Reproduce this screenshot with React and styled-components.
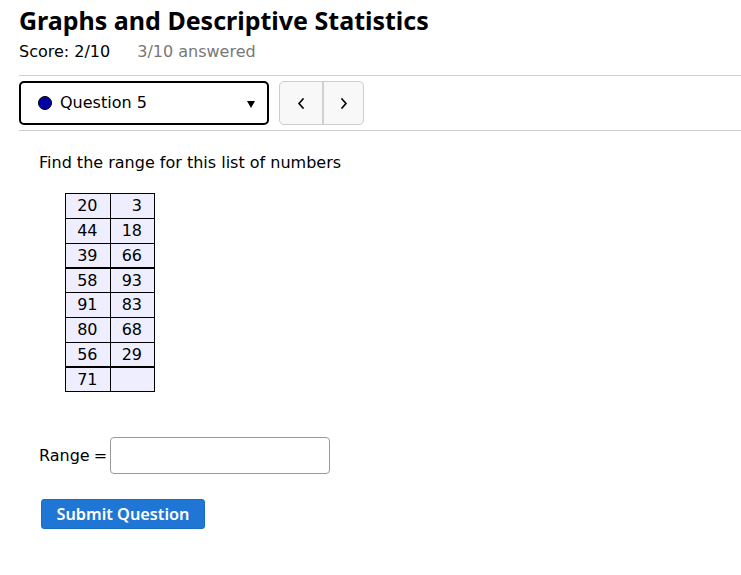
import React from "react";
import styled, { createGlobalStyle } from "styled-components";

const GlobalStyle = createGlobalStyle`
  html, body { margin: 0; padding: 0; background: #fff; }
  body { font-family: "DejaVu Sans", Verdana, sans-serif; font-size: 16px; color: #000; }
`;

const Page = styled.div`
  padding: 5px 0 40px 19px;
`;

const Title = styled.h1`
  margin: 0;
  font-family: "Noto Sans", "DejaVu Sans", sans-serif;
  font-weight: 700;
  font-size: 25px;
  line-height: 30px;
`;

const ScoreLine = styled.div`
  margin-top: 7px;
  display: flex;
  gap: 27px;
  line-height: 20px;
`;

const Muted = styled.span`
  color: #777;
`;

const Divider = styled.hr`
  margin: ${p => p.$top}px 0 0 0;
  border: 0;
  border-top: 1px solid #cfcfcf;
  height: 0;
`;

const NavBar = styled.div`
  margin-top: 5px;
  display: flex;
  align-items: center;
  gap: 10px;
`;

const QuestionSelect = styled.div`
  box-sizing: border-box;
  width: 250px;
  height: 44px;
  border: 2px solid #000;
  border-radius: 5px;
  display: flex;
  align-items: center;
  padding: 0 12px 0 17px;
  gap: 8px;
`;

const Dot = styled.span`
  box-sizing: border-box;
  width: 14px;
  height: 14px;
  border-radius: 50%;
  background: #0000a3;
  border: 1px solid #000;
  flex: none;
`;

const SelectLabel = styled.span`
  flex: 1;
  line-height: 20px;
`;

const Caret = styled.span`
  width: 0;
  height: 0;
  border-left: 4.5px solid transparent;
  border-right: 4.5px solid transparent;
  border-top: 7px solid #000;
  margin-top: 2px;
`;

const NavGroup = styled.div`
  display: flex;
  height: 44px;
  box-sizing: border-box;
  border: 1px solid #cdcdcd;
  border-radius: 5px;
  background: #f8f8f8;
  overflow: hidden;
`;

const NavButton = styled.button`
  width: ${p => p.$w}px;
  border: 0;
  border-left: ${p => (p.$divider ? "2px solid #d0d0d0" : "0")};
  background: transparent;
  padding: 0;
  display: flex;
  align-items: center;
  justify-content: center;
  cursor: pointer;
`;

const QuestionBody = styled.div`
  padding-left: 20px;
`;

const Prompt = styled.p`
  margin: 22px 0 0 0;
  line-height: 20px;
`;

const DataTable = styled.table`
  margin: 20px 0 0 26px;
  border-collapse: collapse;
  width: 90px;
  background: #eeeeff;
`;

const Cell = styled.td`
  border: 1px solid #000;
  border-bottom-width: ${p => (p.$thick ? 2 : 1)}px;
  width: 44px;
  height: 24.75px;
  padding: 1px 12px 0 0;
  text-align: right;
  line-height: 20px;
  box-sizing: border-box;
`;

const AnswerRow = styled.div`
  margin-top: 45px;
  display: flex;
  align-items: center;
  gap: 3px;
`;

const AnswerLabel = styled.label`
  line-height: 20px;
  word-spacing: -1px;
`;

const AnswerInput = styled.input`
  box-sizing: border-box;
  width: 220px;
  height: 37px;
  border: 1px solid #9a9a9a;
  border-radius: 4px;
  background: #fff;
  font: inherit;
  padding: 0 8px;
`;

const SubmitButton = styled.button`
  margin: 25px 0 0 2px;
  box-sizing: border-box;
  width: 164px;
  height: 30px;
  border: 1px solid #1a6cc4;
  border-radius: 3px;
  background: #1f76d4;
  color: #fff;
  font-family: "Noto Sans", "DejaVu Sans", sans-serif;
  font-weight: 600;
  font-size: 16.3px;
  line-height: 28px;
  padding: 0;
  cursor: pointer;
`;

const Chevron = ({ dir }) => (
  <svg width="8" height="11" viewBox="0 0 8 11" aria-hidden="true">
    <path
      d={dir === "left" ? "M6 1 L2 5.5 L6 10" : "M2 1 L6 5.5 L2 10"}
      fill="none"
      stroke="#000"
      strokeWidth="1.6"
      strokeLinecap="square"
    />
  </svg>
);

const rows = [
  ["20", "3"],
  ["44", "18"],
  ["39", "66", true],
  ["58", "93"],
  ["91", "83"],
  ["80", "68"],
  ["56", "29", true],
  ["71", ""],
];

export default function App() {
  return (
    <>
      <GlobalStyle />
      <Page>
        <Title>Graphs and Descriptive Statistics</Title>
        <ScoreLine>
          <span>Score: 2/10</span>
          <Muted>3/10 answered</Muted>
        </ScoreLine>
        <Divider $top={13} />
        <NavBar>
          <QuestionSelect>
            <Dot />
            <SelectLabel>Question 5</SelectLabel>
            <Caret />
          </QuestionSelect>
          <NavGroup>
            <NavButton $w={42} aria-label="Previous">
              <Chevron dir="left" />
            </NavButton>
            <NavButton $w={41} $divider aria-label="Next">
              <Chevron dir="right" />
            </NavButton>
          </NavGroup>
        </NavBar>
        <Divider $top={5} />
        <QuestionBody>
          <Prompt>Find the range for this list of numbers</Prompt>
          <DataTable>
            <tbody>
              {rows.map(([a, b, thick], i) => (
                <tr key={i}>
                  <Cell $thick={thick}>{a}</Cell>
                  <Cell $thick={thick}>{b}</Cell>
                </tr>
              ))}
            </tbody>
          </DataTable>
          <AnswerRow>
            <AnswerLabel htmlFor="range">Range =</AnswerLabel>
            <AnswerInput id="range" type="text" />
          </AnswerRow>
          <SubmitButton>Submit Question</SubmitButton>
        </QuestionBody>
      </Page>
    </>
  );
}
